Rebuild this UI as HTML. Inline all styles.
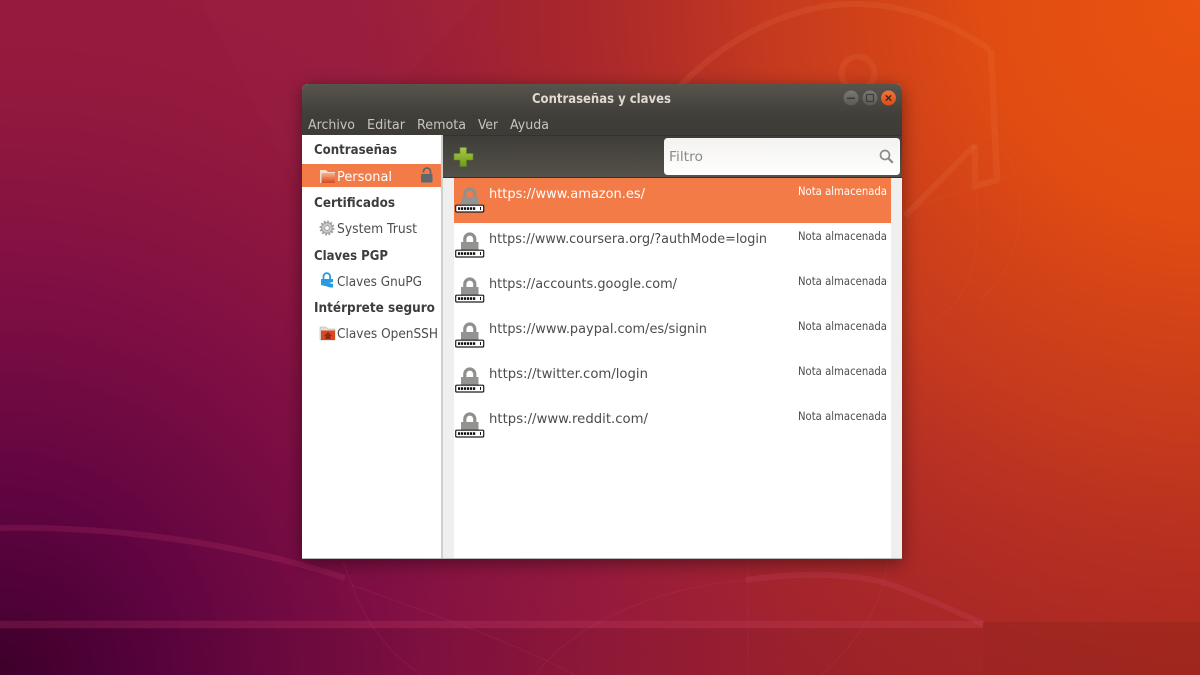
<!DOCTYPE html>
<html><head><meta charset="utf-8"><title>Contraseñas y claves</title>
<style>
html,body{margin:0;padding:0;width:1200px;height:675px;overflow:hidden;background:#8a1a3a}
svg{display:block}
text{font-family:"DejaVu Sans","Liberation Sans",sans-serif;white-space:pre}
.m{font-size:13px;fill:#c9c5bc}
.h{font-size:13px;font-weight:bold;fill:#3d3d3d}
.i{font-size:13px;fill:#4c4c4c}
.u{font-size:13.5px;fill:#4c4c4c}
.n{font-size:11.5px;fill:#4c4c4c}
.win{filter:blur(.3px)}
</style></head><body>
<svg width="1200" height="675" viewBox="0 0 1200 675" xmlns="http://www.w3.org/2000/svg">
<defs>
<radialGradient id="o" gradientUnits="userSpaceOnUse" cx="1200" cy="0" r="860">
<stop offset="0" stop-color="#ea5310"/><stop offset=".25" stop-color="#e24d11" stop-opacity=".98"/><stop offset=".5" stop-color="#cd3f1a" stop-opacity=".85"/><stop offset=".75" stop-color="#b5301f" stop-opacity=".5"/><stop offset="1" stop-color="#a52828" stop-opacity="0"/>
</radialGradient>
<radialGradient id="p" gradientUnits="userSpaceOnUse" cx="0" cy="675" r="800">
<stop offset="0" stop-color="#42002e"/><stop offset=".22" stop-color="#5f0440" stop-opacity="1"/><stop offset=".5" stop-color="#7a0c45" stop-opacity=".8"/><stop offset=".8" stop-color="#8a1440" stop-opacity=".25"/><stop offset="1" stop-color="#8a1440" stop-opacity="0"/>
</radialGradient>
<linearGradient id="br" gradientUnits="userSpaceOnUse" x1="800" y1="300" x2="1200" y2="675">
<stop offset="0" stop-color="#b02a20" stop-opacity="0"/><stop offset="1" stop-color="#a8261e" stop-opacity=".9"/>
</linearGradient>
<linearGradient id="tb" x1="0" y1="0" x2="0" y2="1"><stop offset="0" stop-color="#57544c"/><stop offset=".62" stop-color="#403e39"/><stop offset="1" stop-color="#3e3c37"/></linearGradient>
<linearGradient id="tl" x1="0" y1="0" x2="0" y2="1"><stop offset="0" stop-color="#3f3d38"/><stop offset="1" stop-color="#55524b"/></linearGradient>
<linearGradient id="fb" x1="0" y1="0" x2="0" y2="1"><stop offset="0" stop-color="#f4f3f1"/><stop offset="1" stop-color="#ffffff"/></linearGradient>
<linearGradient id="gr" x1="0" y1="0" x2="0" y2="1"><stop offset="0" stop-color="#a9c94a"/><stop offset="1" stop-color="#6f9a1c"/></linearGradient>
<linearGradient id="fo" x1="0" y1="0" x2="0" y2="1"><stop offset="0" stop-color="#f6b48c"/><stop offset="1" stop-color="#d8481a"/></linearGradient>
<linearGradient id="btn" x1="0" y1="0" x2="0" y2="1"><stop offset="0" stop-color="#7a7873"/><stop offset="1" stop-color="#5c5a55"/></linearGradient>
<linearGradient id="cl" x1="0" y1="0" x2="0" y2="1"><stop offset="0" stop-color="#f2743c"/><stop offset="1" stop-color="#dd4c17"/></linearGradient>
<filter id="s" x="-10%" y="-10%" width="120%" height="125%"><feDropShadow dx="0" dy="4" stdDeviation="9" flood-color="#000" flood-opacity=".42"/></filter>
<g id="lk">
<path d="M464.800 198v-4a5 5 0 0 1 10 0v4" fill="none" stroke="#8f8f8d" stroke-width="3.200"/>
<rect x="461" y="197" width="17.500" height="8.500" fill="#939391"/>
<rect x="455.700" y="205.200" width="28" height="6.800" rx="1" fill="#fff" stroke="#1d1d1d" stroke-width="1.200"/>
<path d="M458 208.600h18" stroke="#111" stroke-width="2.600" stroke-dasharray="2.200 .8"/>
<path d="M480.500 207v3" stroke="#111" stroke-width="1"/>
</g>
</defs>

<!-- wallpaper -->
<rect width="1200" height="675" fill="#991c3c"/>
<rect width="1200" height="675" fill="url(#br)"/>
<rect width="1200" height="675" fill="url(#o)"/>
<rect width="1200" height="675" fill="url(#p)"/>
<path d="M200 0H480L300 190Z" fill="#fff" opacity=".012"/>
<rect y="628" width="983" height="47" fill="#000" opacity=".05"/>
<rect x="983" y="622" width="217" height="53" fill="#000" opacity=".07"/>

<g fill="none" stroke="#f08a50" stroke-opacity=".14">
<path d="M678 88C730 35 790 6 850 4C905 3 950 22 990 50" stroke-width="6"/>
<path d="M991 50L997 180L975 186L975 145" stroke-width="6.500" stroke-linejoin="miter"/>
<path d="M975 145L905 216" stroke-width="6"/>
<circle cx="858" cy="73" r="16.500" stroke-width="6"/>
<path d="M955 15C960 60 970 90 1005 150C1030 200 1025 260 980 300" stroke-width="1" opacity=".5"/>
<path d="M900 215C940 195 980 185 1020 172" stroke-width="1" opacity=".5"/>
<path d="M975 145L1016 113M1000 130L1020 160" stroke-width="1" opacity=".5"/>
<path d="M975 186C985 250 970 300 935 320" stroke-width="1" opacity=".5"/>
</g>
<g fill="none" stroke="#d04a70" stroke-opacity=".2">
<path d="M0 528C100 526 230 540 345 578" stroke-width="6" stroke="#c83a70"/>
<path d="M0 624.500H983" stroke-width="7.500"/>
<path d="M746 580C800 572 860 572 900 588C935 602 965 615 983 624" stroke-width="6"/>
<path d="M343 562L352 585C365 620 385 650 421 675" stroke-width="1.200" opacity=".7"/>
<path d="M352 585C420 610 510 640 575 675" stroke-width="1.200" opacity=".7"/>
<path d="M748 559V675" stroke-width="1.200" opacity=".7"/>
<path d="M535 675C570 630 640 590 746 580" stroke-width="1.200" opacity=".7"/>
<path d="M888 559C884 600 860 640 822 675" stroke-width="1.200" opacity=".7"/>
</g>

<!-- window -->
<g filter="url(#s)">
<path d="M302 559V90a6 6 0 0 1 6-6H896a6 6 0 0 1 6 6V559Z" fill="#fff"/>
</g>
<g class="win">
<path d="M302 135V90a6 6 0 0 1 6-6H896a6 6 0 0 1 6 6V135Z" fill="url(#tb)"/>
<rect x="442" y="135" width="460" height="43" fill="url(#tl)"/>
<rect x="442" y="135" width="460" height="1" fill="#35332f"/>
<rect x="442" y="177" width="460" height="1" fill="#33312d"/>
<rect x="441" y="178" width="2" height="381" fill="#cfcfcd"/>
<rect x="441" y="135" width="2" height="43" fill="#cfcfcd"/>
<rect x="443" y="178" width="11" height="381" fill="#efefef"/>
<rect x="891" y="178" width="11" height="381" fill="#efefef"/>
<rect x="302" y="558" width="600" height="1" fill="#b8b8b8"/>
<rect x="454" y="178" width="437" height="45" fill="#f37b48"/>
<rect x="302" y="164" width="139" height="23" fill="#f37b48"/>

<text x="532" y="103" font-size="13" font-weight="bold" fill="#dfdbd2" textLength="139" lengthAdjust="spacingAndGlyphs">Contraseñas y claves</text>
<circle cx="851" cy="98" r="7.500" fill="url(#btn)"/><rect x="847" y="97.500" width="8" height="1.600" fill="#3f3d39"/>
<circle cx="870" cy="98" r="7.500" fill="url(#btn)"/><rect x="866.500" y="94.500" width="7" height="7" fill="none" stroke="#3f3d39" stroke-width="1.200"/>
<circle cx="888.500" cy="98" r="7.500" fill="url(#cl)"/><path d="M885.800 95.300l5.400 5.400m0-5.400l-5.400 5.400" stroke="#4a2a1c" stroke-width="1.500"/>

<text class="m" x="308" y="129" textLength="47" lengthAdjust="spacingAndGlyphs">Archivo</text>
<text class="m" x="367" y="129" textLength="38" lengthAdjust="spacingAndGlyphs">Editar</text>
<text class="m" x="417" y="129" textLength="49" lengthAdjust="spacingAndGlyphs">Remota</text>
<text class="m" x="478" y="129" textLength="20" lengthAdjust="spacingAndGlyphs">Ver</text>
<text class="m" x="510" y="129" textLength="39" lengthAdjust="spacingAndGlyphs">Ayuda</text>

<!-- sidebar -->
<text class="h" x="314" y="154" textLength="83" lengthAdjust="spacingAndGlyphs">Contraseñas</text>
<text class="i" x="337" y="181" style="fill:#fff" textLength="55" lengthAdjust="spacingAndGlyphs">Personal</text>
<text class="h" x="314" y="207" textLength="81" lengthAdjust="spacingAndGlyphs">Certificados</text>
<text class="i" x="337" y="233" textLength="80" lengthAdjust="spacingAndGlyphs">System Trust</text>
<text class="h" x="314" y="260" textLength="74" lengthAdjust="spacingAndGlyphs">Claves PGP</text>
<text class="i" x="337" y="286" textLength="85" lengthAdjust="spacingAndGlyphs">Claves GnuPG</text>
<text class="h" x="314" y="312" textLength="121" lengthAdjust="spacingAndGlyphs">Intérprete seguro</text>
<text class="i" x="337" y="338" textLength="101" lengthAdjust="spacingAndGlyphs">Claves OpenSSH</text>

<!-- personal folder -->
<path d="M320 170h6l2 2h7v11h-15z" fill="#f6dccb"/>
<rect x="321.500" y="173" width="13.500" height="10" fill="url(#fo)"/>
<!-- open padlock -->
<path d="M423.500 172.500v-1a3.500 3.500 0 0 1 7 0v3" fill="none" stroke="#5c6568" stroke-width="1.700"/>
<rect x="421" y="174" width="11.500" height="8.500" rx="1" fill="#5f686c"/>
<!-- gear -->
<circle cx="327" cy="228" r="5.400" fill="#c8c8c6" stroke="#9a9a98" stroke-width="1"/>
<circle cx="327" cy="228" r="6.500" fill="none" stroke="#a0a09e" stroke-width="2" stroke-dasharray="1.800 1.600"/>
<circle cx="327" cy="228" r="2.300" fill="#fff" stroke="#9a9a98" stroke-width=".8"/>
<!-- gnupg -->
<path d="M323.500 279v-2.500a3.300 3.300 0 0 1 6.600 0v2.500" fill="none" stroke="#2a9be0" stroke-width="1.800"/>
<path d="M321 279h12v3l-4 1 4 1v3.500h-3l-3-1-6-1.500z" fill="#2a9be0"/>
<!-- ssh folder -->
<path d="M320 327h6l2 2h7v11h-15z" fill="#e3ddd8" stroke="#b0aaa5" stroke-width=".5"/>
<rect x="321" y="330.500" width="14" height="9.500" fill="#d9481e"/>
<path d="M328 332l4 4h-1.500v3h-5v-3h-1.500z" fill="#8f2a10"/>

<!-- add -->
<path d="M460 147.500h6.500v6H473v6.500h-6.500v6.500H460V160h-6v-6.500h6z" fill="url(#gr)" stroke="#5f8a16" stroke-width=".6"/>

<!-- filter -->
<rect x="664" y="138" width="236" height="37" rx="3.500" fill="url(#fb)"/>
<text x="669" y="161" font-size="13" fill="#8b8b89" textLength="34" lengthAdjust="spacingAndGlyphs">Filtro</text>
<circle cx="885" cy="155" r="4.500" fill="none" stroke="#8b8b89" stroke-width="1.700"/>
<path d="M888.500 158.500l4.300 4.300" stroke="#8b8b89" stroke-width="2.200"/>

<!-- rows -->
<use href="#lk"/><use href="#lk" y="45"/><use href="#lk" y="90"/><use href="#lk" y="135"/><use href="#lk" y="180"/><use href="#lk" y="225"/>

<text class="u" x="489" y="198" style="fill:#fff" textLength="156" lengthAdjust="spacingAndGlyphs">https://www.amazon.es/</text>
<text class="u" x="489" y="243" textLength="278" lengthAdjust="spacingAndGlyphs">https://www.coursera.org/?authMode=login</text>
<text class="u" x="489" y="288" textLength="188" lengthAdjust="spacingAndGlyphs">https://accounts.google.com/</text>
<text class="u" x="489" y="333" textLength="218" lengthAdjust="spacingAndGlyphs">https://www.paypal.com/es/signin</text>
<text class="u" x="489" y="378" textLength="159" lengthAdjust="spacingAndGlyphs">https://twitter.com/login</text>
<text class="u" x="489" y="423" textLength="159" lengthAdjust="spacingAndGlyphs">https://www.reddit.com/</text>

<text class="n" x="798" y="195" style="fill:#fff" textLength="89" lengthAdjust="spacingAndGlyphs">Nota almacenada</text>
<text class="n" x="798" y="240" textLength="89" lengthAdjust="spacingAndGlyphs">Nota almacenada</text>
<text class="n" x="798" y="285" textLength="89" lengthAdjust="spacingAndGlyphs">Nota almacenada</text>
<text class="n" x="798" y="330" textLength="89" lengthAdjust="spacingAndGlyphs">Nota almacenada</text>
<text class="n" x="798" y="375" textLength="89" lengthAdjust="spacingAndGlyphs">Nota almacenada</text>
<text class="n" x="798" y="420" textLength="89" lengthAdjust="spacingAndGlyphs">Nota almacenada</text>
</g>
</svg>
</body></html>
